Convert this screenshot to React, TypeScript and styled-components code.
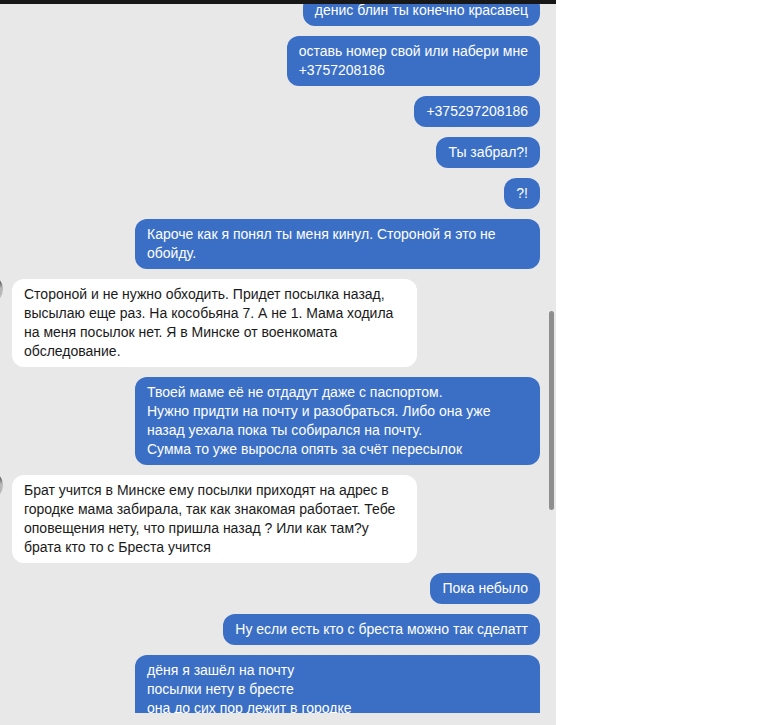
import React from 'react';
import styled, { createGlobalStyle } from 'styled-components';

const Global = createGlobalStyle`
  html, body { margin: 0; padding: 0; background: #ffffff; }
  body { font-family: "Liberation Sans", Arial, Helvetica, sans-serif; }
`;

const Page = styled.div`
  display: flex;
  width: 768px;
  height: 725px;
  background: #ffffff;
`;

const ChatPanel = styled.section`
  position: relative;
  box-sizing: border-box;
  width: 556px;
  height: 725px;
  display: flex;
  flex-direction: column;
  padding-bottom: 12px;
  background: #e8e8e8;
`;

const TopBar = styled.div`
  flex: none;
  height: 4px;
  background: #171717;
`;

const Viewport = styled.div`
  position: relative;
  flex: 1;
  overflow: hidden;
`;

const MessageList = styled.div`
  display: flex;
  flex-direction: column;
  gap: 10px;
  margin-top: -9px;
  padding: 0 16px 0 12px;
`;

const Row = styled.div<{ $out: boolean }>`
  position: relative;
  display: flex;
  justify-content: ${(p) => (p.$out ? 'flex-end' : 'flex-start')};
`;

const Bubble = styled.div<{ $out: boolean; $wide?: boolean }>`
  box-sizing: border-box;
  max-width: 405px;
  ${(p) => (p.$wide ? 'width: 405px;' : '')}
  padding: 6px 12px;
  border-radius: 12px;
  font-size: 14px;
  line-height: 19px;
  white-space: pre-wrap;
  background: ${(p) => (p.$out ? '#3b6fc5' : '#ffffff')};
  color: ${(p) => (p.$out ? '#ffffff' : '#1a1a1a')};
`;

const Avatar = styled.div`
  position: absolute;
  left: -37px;
  top: -4px;
  width: 28px;
  height: 28px;
  border-radius: 50%;
  background: radial-gradient(circle at 92% 60%, #b8b8b8 0 12%, #6a6a6a 30%, #4e4e4e 100%);
`;

const ScrollThumb = styled.div`
  position: absolute;
  right: 2px;
  top: 307px;
  width: 5px;
  height: 199px;
  border-radius: 3px;
  background: #8e8e8e;
`;

type Msg = { out: boolean; text: string; wide?: boolean };

const messages: Msg[] = [
  { out: true, text: 'денис блин ты конечно красавец' },
  { out: true, text: 'оставь номер свой или набери мне\n+3757208186' },
  { out: true, text: '+375297208186' },
  { out: true, text: 'Ты забрал?!' },
  { out: true, text: '?!' },
  { out: true, text: 'Кароче как я понял ты меня кинул. Стороной я это не обойду.' },
  {
    out: false,
    text:
      'Стороной и не нужно обходить. Придет посылка назад, высылаю еще раз. На кособьяна 7. А не 1. Мама ходила на меня посылок нет. Я в Минске от военкомата обследование.',
  },
  {
    out: true,
    text:
      'Твоей маме её не отдадут даже с паспортом.\nНужно придти на почту и разобраться. Либо она уже назад уехала пока ты собирался на почту.\nСумма то уже выросла опять за счёт пересылок',
  },
  {
    out: false,
    text:
      'Брат учится в Минске ему посылки приходят на адрес в городке мама забирала, так как знакомая работает. Тебе оповещения нету, что пришла назад ? Или как там?у\nбрата кто то с Бреста учится',
  },
  { out: true, text: 'Пока небыло' },
  { out: true, text: 'Ну если есть кто с бреста можно так сделатт' },
  {
    out: true,
    wide: true,
    text: 'дёня я зашёл на почту\nпосылки нету в бресте\nона до сих пор лежит в городке',
  },
];

export default function App() {
  return (
    <Page>
      <Global />
      <ChatPanel>
        <TopBar />
        <Viewport>
          <MessageList>
            {messages.map((m, i) => (
              <Row key={i} $out={m.out}>
                {!m.out && <Avatar />}
                <Bubble $out={m.out} $wide={m.wide}>
                  {m.text}
                </Bubble>
              </Row>
            ))}
          </MessageList>
          <ScrollThumb />
        </Viewport>
      </ChatPanel>
    </Page>
  );
}
